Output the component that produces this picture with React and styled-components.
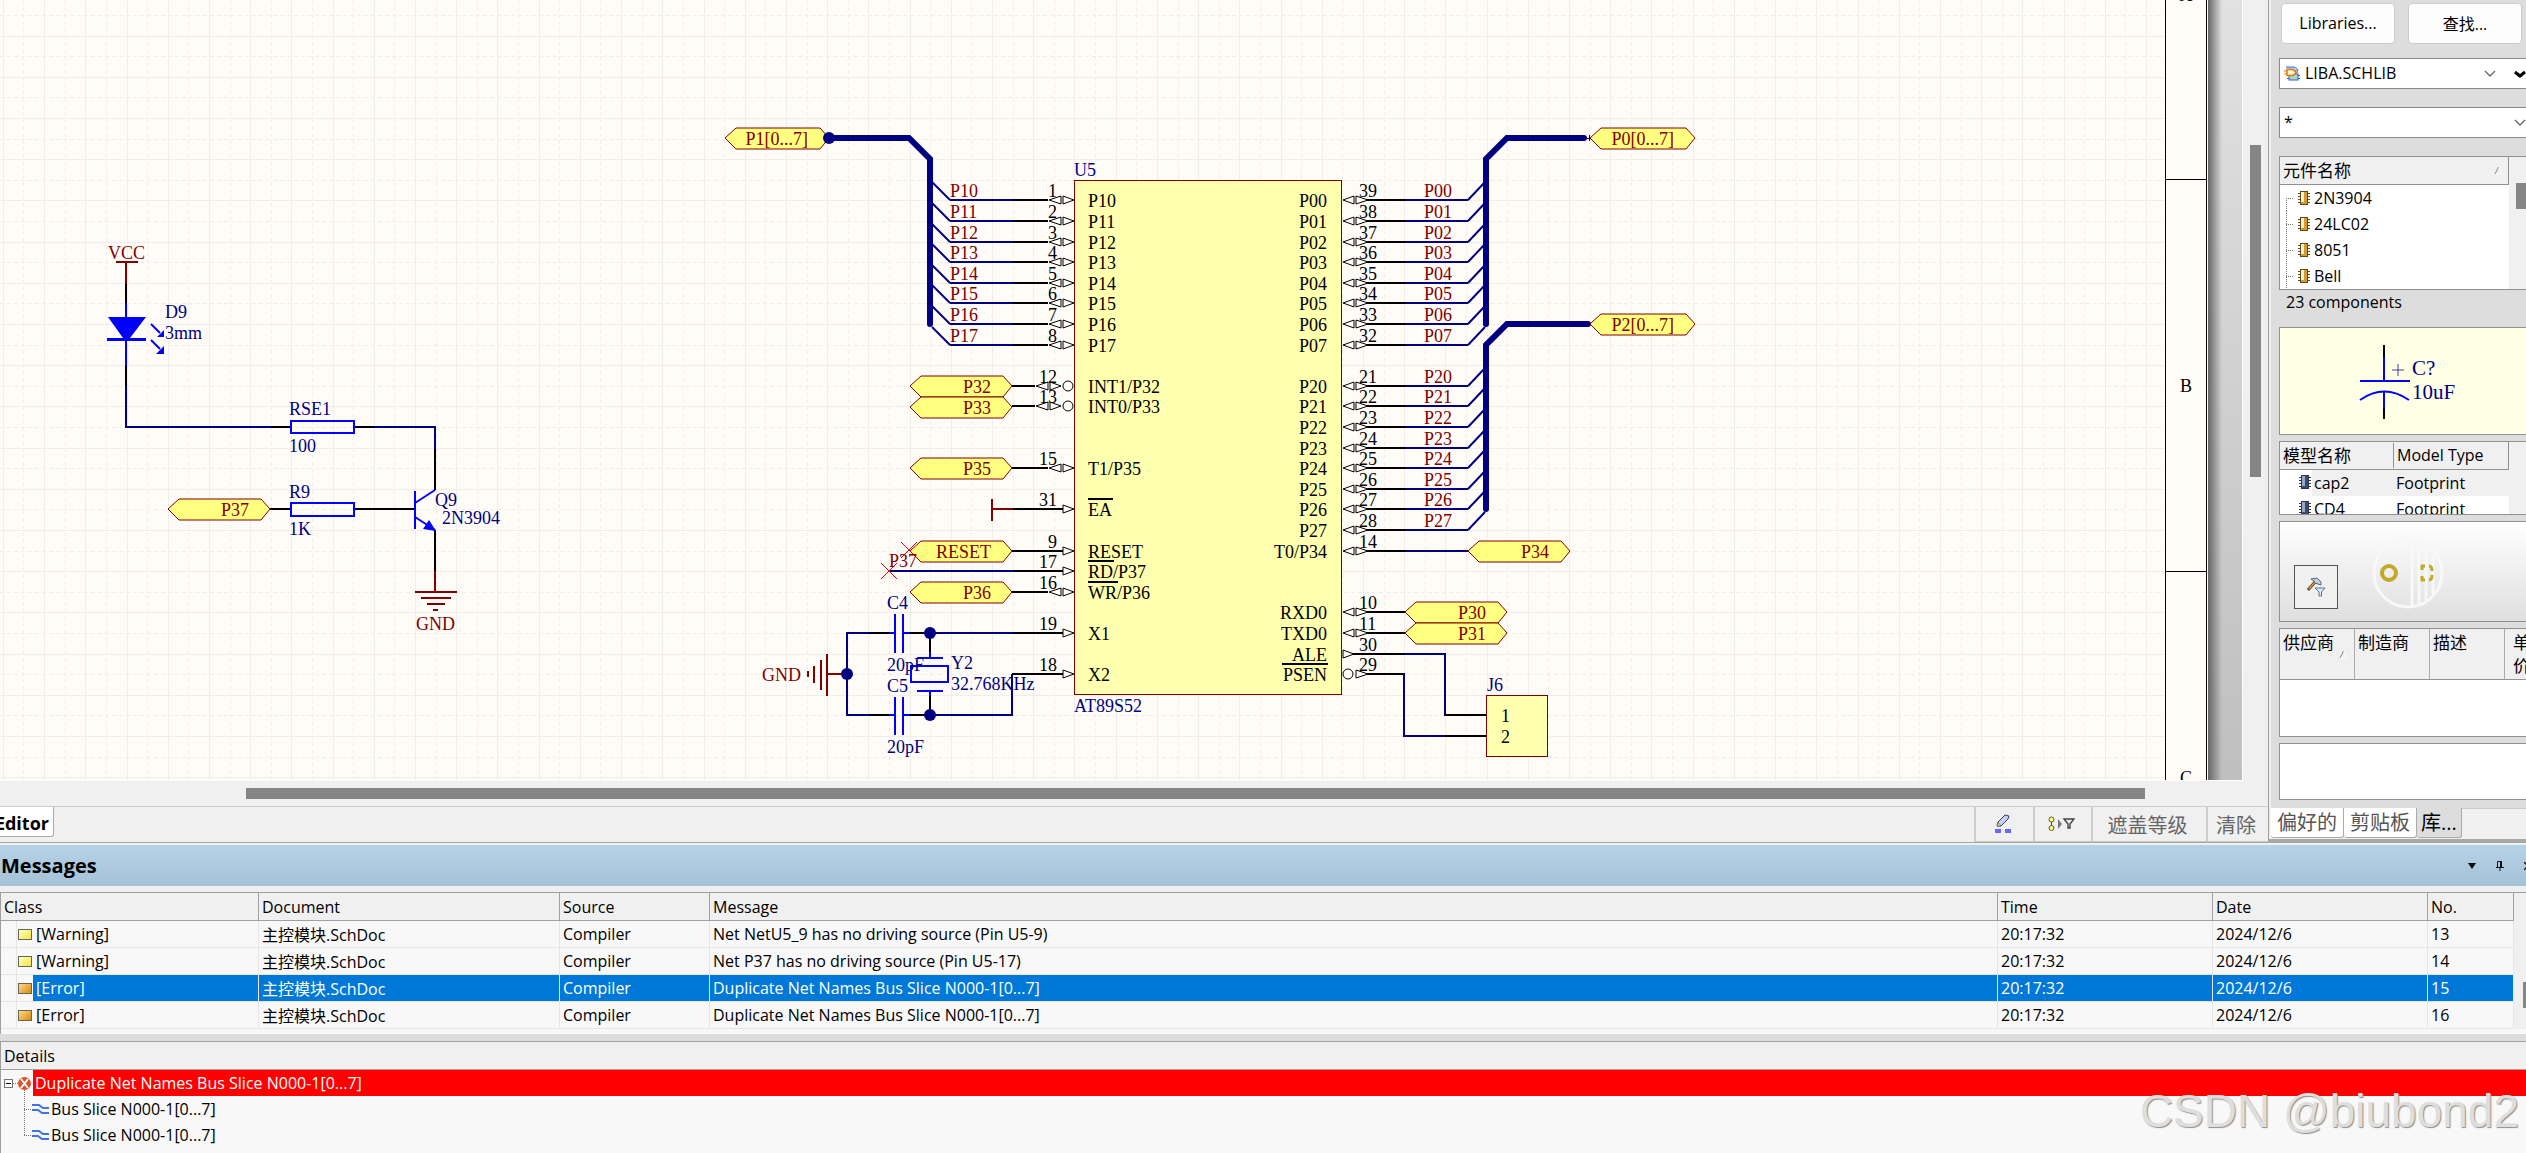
import React from "react";
import styled, { createGlobalStyle, css } from "styled-components";

const NAVY = "#000080";
const BLUE = "#0000ff";
const MAROON = "#800000";
const BLACK = "#000000";

const GlobalStyle = createGlobalStyle`
  * { box-sizing: border-box; }
  body {
    margin: 0;
    background: #f0f0f0;
    color: #000;
    font-family: "Open Sans", "Noto Sans CJK SC", sans-serif;
    font-size: 16px;
    overflow: hidden;
  }
  button, select, input {
    font: inherit;
    color: inherit;
  }
`;

/* ---------- schematic ---------- */

const Drawing = styled.svg`
  display: block;
  flex: none;
  background: #fffcf8;
`;

const Label = styled.text`
  font-family: "Liberation Serif", "Times New Roman", serif;
  font-size: ${(p) => p.$size || 18}px;
  fill: ${(p) => p.$color || NAVY};
  text-anchor: ${(p) => p.$anchor || "start"};
`;

const Wire = ({ d, color = NAVY, w = 2 }) => (
  <path d={d} fill="none" stroke={color} strokeWidth={w} shapeRendering="crispEdges" />
);

const row = (j) => Math.round(200.3 + 20.6 * j);

function Grid() {
  const lines = [];
  for (let i = -6; i <= 98; i += 1) {
    const x = Math.round(126.5 + 20.608 * i) + 0.5;
    if (x > 0 && x < 2164)
      lines.push(
        <line key={`v${i}`} x1={x} x2={x} y1="0" y2="780" strokeDasharray={i % 2 ? "4 3" : undefined} />
      );
  }
  for (let j = -10; j <= 28; j += 1) {
    const y = row(j) + 0.5;
    if (y > 0 && y < 780)
      lines.push(
        <line key={`h${j}`} x1="0" x2="2164" y1={y} y2={y} strokeDasharray={j % 2 ? "4 3" : undefined} />
      );
  }
  return <g stroke="#eeeeea">{lines}</g>;
}

function Port({ x, y, w = 102, text }) {
  const r = x + w;
  const top = y - 10;
  const bot = y + 11;
  return (
    <g>
      <polygon
        points={`${x},${y} ${x + 11},${top} ${r - 9},${top} ${r},${y} ${r - 9},${bot} ${x + 11},${bot}`}
        fill="#ffff80"
        stroke={MAROON}
      />
      <Label x={r - 21} y={y + 7} $anchor="end" $color={MAROON}>{text}</Label>
    </g>
  );
}

const Arrow = ({ base, tip, y }) => (
  <polygon
    points={`${base},${y - 4} ${tip},${y} ${base},${y + 4}`}
    fill="#fffcf8"
    stroke="#000"
    strokeWidth="1"
  />
);

function LeftPin({ j, num, name, io, inverted, over }) {
  const y = row(j);
  const base = inverted ? 1050 : 1063;
  const start = io ? base - 15 : base;
  return (
    <g>
      <Wire d={`M1012 ${y}H${start}`} color={BLACK} />
      {io && <Arrow base={base - 2} tip={base - 14} y={y} />}
      <Arrow base={base} tip={base + 11} y={y} />
      {inverted && <circle cx="1068" cy={y} r="5" fill="#fffcf8" stroke="#000" />}
      <Label x="1057" y={y - 3} $anchor="end" $color={BLACK}>{num}</Label>
      <Label x="1088" y={y + 7} $color={BLACK}>{name}</Label>
      {over && <Wire d={`M1088 ${y - 10}H${1088 + over}`} color={BLACK} />}
    </g>
  );
}

function RightPin({ j, num, name, io = true, inverted, over }) {
  const y = row(j);
  return (
    <g>
      <Wire d={`M${io || inverted ? 1366 : 1353} ${y}H1405`} color={BLACK} />
      {io && <Arrow base={1354} tip={1343} y={y} />}
      {(io || inverted) && <Arrow base={1356} tip={1368} y={y} />}
      {!io && !inverted && <Arrow base={1343} tip={1354} y={y} />}
      {inverted && <circle cx="1348" cy={y} r="5" fill="#fffcf8" stroke="#000" />}
      <Label x="1359" y={y - 3} $color={BLACK}>{num}</Label>
      <Label x="1327" y={y + 7} $anchor="end" $color={BLACK}>{name}</Label>
      {over && <Wire d={`M${1328 - over} ${y - 10}H1328`} color={BLACK} />}
    </g>
  );
}

const NetLeft = ({ j, text }) => {
  const y = row(j);
  return (
    <g>
      <Wire d={`M950 ${y}H1013`} />
      <path d={`M950 ${y}L932 ${y - 18}`} stroke={NAVY} strokeWidth="2" />
      <Label x="950" y={y - 3} $color={MAROON}>{text}</Label>
    </g>
  );
};

const NetRight = ({ j, text }) => {
  const y = row(j);
  return (
    <g>
      <Wire d={`M1405 ${y}H1468`} />
      <path d={`M1468 ${y}L1485 ${y - 18}`} stroke={NAVY} strokeWidth="2" />
      <Label x="1424" y={y - 3} $color={MAROON}>{text}</Label>
    </g>
  );
};

const Cross = ({ x, y }) => (
  <path d={`M${x - 8} ${y - 8}l16 16M${x + 8} ${y - 8}l-16 16`} stroke="#ff0000" />
);

const Junction = ({ x, y }) => <circle cx={x} cy={y} r="6" fill={NAVY} />;

const eight = [0, 1, 2, 3, 4, 5, 6, 7];

function Schematic() {
  return (
    <Drawing width="2208" height="780" viewBox="0 0 2208 780" role="img" aria-label="Schematic sheet">
      <Grid />

      {/* sheet border */}
      <rect x="2166" y="0" width="40" height="780" fill="#fffcf8" />
      <Wire d="M2165.5 0V780M2206.5 0V780M2166 179.5H2206M2166 571.5H2206" color={BLACK} w={1} />
      <Label x="2186" y="1" $anchor="middle" $color={BLACK}>A</Label>
      <Label x="2186" y="392" $anchor="middle" $color={BLACK}>B</Label>
      <Label x="2186" y="784" $anchor="middle" $color={BLACK}>C</Label>

      {/* LED driver */}
      <Label x="108" y="259" $color={MAROON}>VCC</Label>
      <Wire d="M116 262H138M126 262V284" color={MAROON} />
      <Wire d="M126 284V303M126 366V386M271 427H290M354 427H374M435 449V490M270 509H290M354 509H415M435 530V571" color={BLACK} />
      <Wire d="M126 303V366M415 491V529" color={BLUE} />
      <polygon points="108,317 146,317 130,338 123,338" fill={BLUE} />
      <Wire d="M107 339H146" color={BLUE} w={3} />
      <path d="M151 324L160 333M151 340L160 349M415 503L435 490M415 517L435 530" stroke={BLUE} strokeWidth="2" />
      <path d="M164 330V337H157ZM164 346V354H156ZM436 531L423 529L429 520Z" fill={BLUE} />
      <Wire d="M126 386V427H271M374 427H435V449" />
      <rect x="291" y="421" width="63" height="12" fill="none" stroke={BLUE} strokeWidth="2" />
      <rect x="291" y="503" width="63" height="13" fill="none" stroke={BLUE} strokeWidth="2" />
      <Label x="165" y="318">D9</Label>
      <Label x="165" y="339">3mm</Label>
      <Label x="289" y="415">RSE1</Label>
      <Label x="289" y="452">100</Label>
      <Label x="289" y="498">R9</Label>
      <Label x="289" y="535">1K</Label>
      <Label x="435" y="506">Q9</Label>
      <Label x="442" y="524">2N3904</Label>
      <Port x={168} y={509} text="P37" />
      <Wire d="M435 571V592M415 592H457M421 598H451M427 604H445M433 610H438" color={MAROON} />
      <Label x="416" y="630" $color={MAROON}>GND</Label>

      {/* microcontroller */}
      <rect x="1074.5" y="180.5" width="267" height="514" fill="#ffffb0" stroke={MAROON} />
      <Label x="1074" y="176">U5</Label>
      <Label x="1074" y="712">AT89S52</Label>

      {eight.map((n) => (
        <g key={n}>
          <LeftPin j={n} num={n + 1} name={`P1${n}`} io />
          <NetLeft j={n} text={`P1${n}`} />
          <RightPin j={n} num={39 - n} name={`P0${n}`} />
          <NetRight j={n} text={`P0${n}`} />
          <RightPin j={n + 9} num={21 + n} name={`P2${n}`} />
          <NetRight j={n + 9} text={`P2${n}`} />
        </g>
      ))}
      <LeftPin j={9} num="12" name="INT1/P32" io inverted />
      <LeftPin j={10} num="13" name="INT0/P33" io inverted />
      <LeftPin j={13} num="15" name="T1/P35" io />
      <LeftPin j={15} num="31" name="EA" over={25} />
      <LeftPin j={17} num="9" name="RESET" />
      <LeftPin j={18} num="17" name="RD/P37" over={26} />
      <LeftPin j={19} num="16" name="WR/P36" io over={30} />
      <LeftPin j={21} num="19" name="X1" />
      <LeftPin j={23} num="18" name="X2" />
      <RightPin j={17} num="14" name="T0/P34" />
      <RightPin j={20} num="10" name="RXD0" />
      <RightPin j={21} num="11" name="TXD0" />
      <RightPin j={22} num="30" name="ALE" io={false} />
      <RightPin j={23} num="29" name="PSEN" io={false} inverted over={46} />

      {/* buses */}
      <g fill="none" stroke={NAVY} strokeWidth="6" strokeLinecap="round">
        <path d="M829 138H909L930 159V324" />
        <path d="M1584 138H1507L1486 159V324" />
        <path d="M1588 324H1507L1486 345V509" />
      </g>
      <Wire d="M1586 138H1592M1589 135V141" w={1} />
      <Port x={725} y={138} w={104} text="P1[0...7]" />
      <Junction x={829} y={138} />
      <Port x={1590} y={138} w={105} text="P0[0...7]" />
      <Port x={1590} y={324} w={105} text="P2[0...7]" />

      {/* ports on the left */}
      <Port x={910} y={386} text="P32" />
      <Port x={910} y={407} text="P33" />
      <Port x={910} y={468} text="P35" />
      <Port x={910} y={551} text="RESET" />
      <Port x={910} y={592} text="P36" />
      <Wire d="M992 509H1013M992 499V521" color={MAROON} />
      <Wire d="M889 571H1013" />
      <Cross x={909} y={550} />
      <Cross x={889} y={571} />
      <Label x="889" y="567" $color={MAROON}>P37</Label>

      {/* ports on the right */}
      <Wire d="M1405 551H1468" />
      <Port x={1468} y={551} text="P34" />
      <Port x={1405} y={612} text="P30" />
      <Port x={1405} y={633} text="P31" />

      {/* oscillator */}
      <Wire d="M869 633H847V715H869M930 633H1013M930 715H1012V674" />
      <Wire d="M869 633H890M869 715H890M910 633H930M910 715H930M930 633V653M930 696V715" color={BLACK} />
      <Wire d="M889 633H895M903 633H910M889 715H895M903 715H910M895 614V653M903 614V653M895 697V735M903 697V735M917 658H943M917 691H943M930 652V658M930 691V696" color={BLUE} />
      <rect x="911" y="666" width="37" height="16" fill="none" stroke={BLUE} strokeWidth="2" />
      <Wire d="M827 674H847M827 654V696M821 660V690M814 666V683M808 671V677" color={MAROON} />
      <Junction x={847} y={674} />
      <Junction x={930} y={633} />
      <Junction x={930} y={715} />
      <Label x="762" y="681" $color={MAROON}>GND</Label>
      <Label x="887" y="609">C4</Label>
      <Label x="887" y="671">20pF</Label>
      <Label x="887" y="692">C5</Label>
      <Label x="887" y="753">20pF</Label>
      <Label x="951" y="669">Y2</Label>
      <Label x="951" y="690">32.768KHz</Label>

      {/* header J6 */}
      <Wire d="M1404 654H1445V715M1404 673V736H1446" />
      <Wire d="M1444 715H1486M1446 736H1486" color={BLACK} />
      <rect x="1486.5" y="695.5" width="61" height="61" fill="#ffffb0" stroke={MAROON} />
      <Label x="1487" y="691">J6</Label>
      <Label x="1501" y="722" $color={BLACK}>1</Label>
      <Label x="1501" y="743" $color={BLACK}>2</Label>
    </Drawing>
  );
}

/* ---------- window frame ---------- */

const Window = styled.div`
  display: flex;
  flex-direction: column;
  min-height: 100vh;
  position: relative;
  overflow: hidden;
`;

const Workspace = styled.div`
  display: flex;
`;

const EditorPane = styled.main`
  flex: 1;
  min-width: 0;
  display: flex;
  flex-direction: column;
`;

const CanvasRow = styled.div`
  display: flex;
`;

const Canvas = styled.div`
  flex: 1;
  min-width: 0;
  display: flex;
  overflow: hidden;
  border-right: 1px solid #fff;
  border-bottom: 1px solid #fff;
`;

const Backdrop = styled.div`
  flex: 1;
  background: linear-gradient(to right, #666 0, rgba(120, 120, 120, 0) 14px),
    linear-gradient(#e1e1e1, #bfbfbf);
`;

const VTrack = styled.div`
  width: 25px;
  padding: 145px 7px 0;
`;

const Thumb = styled.div`
  height: ${(p) => p.$height}px;
  background: #858585;
`;

const HTrack = styled.div`
  padding: 7px 123px 7px 246px;
`;

const StatusBar = styled.div`
  height: 36px;
  display: flex;
  border-top: 1px solid #ccc;
`;

const EditorTab = styled.button`
  width: 54px;
  height: 30px;
  padding: 2px 4px 0 0;
  display: flex;
  justify-content: flex-end;
  align-items: center;
  overflow: hidden;
  border: 0;
  border-right: 1px solid #aaa;
  border-bottom: 1px solid #aaa;
  border-radius: 0 0 3px 0;
  background: #fff;
  font-size: 18px;
  font-weight: 700;
`;

const Spacer = styled.div`
  flex: 1;
`;

const StatusButton = styled.button`
  width: ${(p) => p.$width}px;
  height: 35px;
  padding: 0 4px 0 0;
  display: flex;
  align-items: center;
  justify-content: center;
  border: 0;
  border-left: 2px solid #ccc;
  border-bottom: 1px solid #ccc;
  background: #f0f0f0;
  color: #666;
  font-size: 20px;
`;

/* ---------- library panel ---------- */

const SidePanel = styled.aside`
  width: 258px;
  flex: none;
  display: flex;
  flex-direction: column;
  overflow: hidden;
  border-left: 1px solid #a0a0a0;
  border-bottom: 3px solid #a9a9a9;
  background: #f0f0f0;
`;

const PanelBody = styled.div`
  flex: 1;
  display: flex;
  flex-direction: column;
  gap: 6px;
  margin-left: 2px;
  padding: 3px 0 8px 8px;
  background: #ddd;
`;

const ButtonRow = styled.div`
  display: flex;
  gap: 13px;
  padding-left: 2px;
  margin-bottom: 8px;
`;

const PushButton = styled.button`
  width: 114px;
  height: 41px;
  flex: none;
  padding: 0 0 2px;
  border: 1px solid #ccc;
  border-radius: 4px;
  background: #fdfdfd;
`;

const Combo = styled.div`
  height: 31px;
  margin-bottom: 12px;
  display: flex;
  align-items: center;
  gap: 4px;
  padding: 0 0 0 4px;
  border: 1px solid #8a8a8a;
  border-right: 0;
  background: #fff;
`;

const ComboSelect = styled.select`
  flex: 1;
  min-width: 0;
  height: 28px;
  padding: 0 0 2px;
  border: 0;
  appearance: none;
  background: transparent;
`;

const ComboInput = styled.input`
  flex: 1;
  min-width: 0;
  height: 28px;
  padding: 0 0 2px;
  border: 0;
  background: transparent;
`;

const ChevronGap = styled.span`
  width: 10px;
`;

const Box = styled.div`
  height: ${(p) => p.$height}px;
  display: flex;
  overflow: hidden;
  border: 1px solid #919191;
  border-right: 0;
  background: ${(p) => p.$fill || "#fff"};
`;

const ListArea = styled.div`
  flex: 1;
  min-width: 0;
`;

const SideTrack = styled.div`
  width: 17px;
  padding: 26px 0 0 7px;
  background: #f0f0f0;
`;

const ListHead = styled.div`
  display: flex;
  height: 28px;
  line-height: 28px;
  padding-left: 3px;
  align-items: center;
  justify-content: space-between;
  font-size: 17px;
  background: #f0f0f0;
  border-right: 1px solid #919191;
  border-bottom: 1px solid #919191;
`;

const HeadName = styled.span`
  width: 110px;
`;

const HeadType = styled.span`
  flex: 1;
  height: 25px;
  line-height: 25px;
  padding-left: 3px;
  border-left: 1px solid #919191;
  font-size: 16px;
`;

const Items = styled.ul`
  list-style: none;
  margin: 0;
  padding: 0;
`;

const TreeItem = styled.li`
  height: 26px;
  display: flex;
  align-items: center;
  gap: 4px;
  padding-left: 6px;
`;

const ModelItem = styled.li`
  height: 26px;
  display: grid;
  grid-template-columns: 32px 82px 1fr;
  align-items: center;
`;

const ModelCell = styled.span`
  height: 26px;
  line-height: 26px;
  padding-left: ${(p) => (p.$icon ? 19 : 2)}px;
  background: ${(p) => (p.$active ? "#f0f0f0" : "transparent")};
`;

const Count = styled.div`
  height: 31px;
  line-height: 25px;
  padding-left: 7px;
`;

const Preview3D = styled.div`
  height: 101px;
  display: flex;
  align-items: flex-start;
  padding: 28px 0 0 14px;
  border: 1px solid #919191;
  border-right: 0;
  background: linear-gradient(#fff, #dfdfdf);
`;

const ToolButton = styled.button`
  width: 44px;
  height: 44px;
  margin-top: 15px;
  padding: 0;
  display: flex;
  align-items: center;
  justify-content: center;
  border: 1px solid #555;
  background: #f0f0f0;
`;

const Footprint = styled.svg`
  margin: -14px 0 0 34px;
`;

const SupplierTable = styled.table`
  width: 273px;
  flex: none;
  align-self: flex-start;
  table-layout: fixed;
  border-collapse: separate;
  border-spacing: 0;
  background: #f0f0f0;

  th {
    height: 51px;
    padding: 2px 3px;
    font-size: 17px;
    font-weight: 400;
    line-height: 23px;
    text-align: left;
    vertical-align: top;
    border-right: 1px solid #aaa;
    border-bottom: 1px solid #919191;
  }
  th:last-child {
    padding-left: 8px;
    padding-right: 20px;
  }
`;

const SortHead = styled.span`
  display: flex;
  flex-direction: column;
  white-space: nowrap;

  svg {
    align-self: flex-end;
    margin: -4px 3px 0 0;
  }
`;

const SideTabs = styled.div`
  display: flex;
  height: 31px;
  margin-left: 2px;
`;

const SideTab = styled.button`
  height: 30px;
  width: ${(p) => p.$width}px;
  padding: 0;
  white-space: nowrap;
  border: 0;
  border-right: 1px solid #aaa;
  border-bottom: 1px solid #aaa;
  border-radius: 0 0 3px 3px;
  background: #fff;
  color: #555;
  font-size: 20px;
  line-height: 28px;
  ${(p) =>
    p.$active &&
    css`
      background: #ddd;
      color: #000;
    `}
`;

const TabFill = styled.div`
  flex: 1;
  border-top: 1px solid #ccc;
`;

/* ---------- messages panel ---------- */

const Messages = styled.section`
  flex: 1;
  display: flex;
  flex-direction: column;
  border-top: 1px solid #a5a5a5;
  background: #f0f0f0;
`;

const TitleBar = styled.header`
  height: 41px;
  margin: 2px 0 6px;
  padding-left: 1px;
  display: flex;
  align-items: center;
  overflow: hidden;
  background: linear-gradient(#b6d2e6, #a4c2d8);
`;

const Title = styled.h2`
  flex: 1;
  margin: 0;
  font-size: 20px;
  line-height: 30px;
`;

const TitleButtons = styled.div`
  width: 64px;
  flex: none;
  display: flex;
  gap: 8px;
`;

const IconButton = styled.button`
  width: 20px;
  height: 20px;
  flex: none;
  padding: 0;
  border: 0;
  background: none;
  display: flex;
  align-items: center;
  justify-content: center;
`;

const TableRow = styled.div`
  display: flex;
  padding-bottom: 5px;
  border-top: 1px solid #a0a0a0;
  border-left: 1px solid #a0a0a0;
  background: #f8f8f8;
`;

const MessageTable = styled.table`
  flex: 1;
  min-width: 0;
  table-layout: fixed;
  border-collapse: separate;
  border-spacing: 0;

  th, td {
    padding: 0 3px;
    text-align: left;
    font-weight: 400;
    white-space: nowrap;
    overflow: hidden;
  }
  th {
    height: 28px;
    background: #f0f0f0;
    border-right: 1px solid #a0a0a0;
    border-bottom: 1px solid #a0a0a0;
  }
  td {
    height: 27px;
    border-right: 1px solid #e6e6e6;
    border-bottom: 1px solid #e6e6e6;
  }
  td:first-child {
    padding: 0;
  }
`;

const MessageRow = styled.tr`
  ${(p) =>
    p.$active &&
    css`
      td {
        background: #0078d7;
        color: #fff;
      }
    `}
`;

const ClassCell = styled.div`
  display: flex;
  align-items: center;
  height: 26px;
  padding-left: 15px;
  background: linear-gradient(to right, #f8f8f8 32px, transparent 32px);
`;

const ClassName = styled.span`
  color: ${(p) => (p.$active ? "#fff" : "#000")};
`;

const Badge = styled.span`
  width: 14px;
  height: 11px;
  margin: 0 4px 0 1px;
  border: 1px solid #666655;
  background: ${(p) =>
    p.$kind === "Error"
      ? "linear-gradient(135deg, #ffd98a, #d98a10)"
      : "linear-gradient(135deg, #ffffc8, #f4e640)"};
`;

const Rule = styled.span`
  width: 1px;
  height: 26px;
  background: #e6e6e6;
`;

const MessageTrack = styled.div`
  width: 12px;
  padding: 89px 0 0 9px;
  background: #f0f0f0;
`;

const Splitter = styled.div`
  height: 8px;
  background: #ddd;
  border-bottom: 1px solid #a0a0a0;
`;

const Details = styled.div`
  flex: 1;
  border-left: 1px solid #a0a0a0;
  background: #f8f8f8;
`;

const DetailsHead = styled.h3`
  margin: 0;
  height: 28px;
  padding-left: 3px;
  font-size: 16px;
  font-weight: 400;
  line-height: 28px;
  background: #f0f0f0;
  border-bottom: 1px solid #a0a0a0;
`;

const DetailItem = styled.li`
  height: 26px;
  display: flex;
  align-items: center;
  line-height: 26px;
`;

const DetailText = styled.span`
  flex: 1;
  padding-left: 2px;
  color: ${(p) => (p.$error ? "#fff" : "#000")};
  background: ${(p) => (p.$error ? "#f00" : "transparent")};
`;

const Watermark = styled.div`
  position: absolute;
  right: 7px;
  bottom: 16px;
  font-family: "Liberation Sans", Arial, sans-serif;
  font-size: 46px;
  line-height: 52px;
  color: #dedede;
  text-shadow: 1px 1px 1px #8c8c8c;
  pointer-events: none;
`;

/* ---------- icons ---------- */

const Chevron = ({ heavy }) => (
  <svg width="12" height="12" viewBox="0 0 12 12" fill="none" stroke={heavy ? "#000" : "#666"} strokeWidth={heavy ? 3 : 1.3}>
    <path d={heavy ? "M1 4L6 8L11 4" : "M1 3L6 8L11 3"} />
  </svg>
);

const SortMark = () => (
  <svg width="9" height="9" viewBox="0 0 9 9" fill="none">
    <path d="M4.500 1L8 8H1" stroke="#fff" />
    <path d="M1 8L4.500 1" stroke="#888" />
  </svg>
);

const LibraryIcon = () => (
  <svg width="17" height="17" viewBox="0 0 17 17" fill="none">
    <path d="M2 2H9C13 2 14 5 14 6H4" fill="#b9ccf0" stroke="#4468c8" />
    <rect x="5" y="9" width="9" height="6" fill="#a8d4d0" stroke="#3b62b8" />
    <path d="M3 10.500H5M3 13.500H5M14 10.500H16M14 13.500H16" stroke="#3b62b8" />
    <path d="M3 4.500H9L12 7.500L9 10.500H3Z" fill="#fff5d0" stroke="#e07a10" strokeWidth="1.500" />
    <path d="M0 6H3M0 9H3M12 7.500H14" stroke="#e07a10" />
  </svg>
);

const ChipIcon = ({ light = "#fff0c0", dark = "#d39b30", edge = "#5a4a20" }) => (
  <svg width="12" height="14" viewBox="0 0 12 14">
    <path d="M0 2.500H12M0 5.500H12M0 8.500H12M0 11.500H12" stroke={edge} />
    <rect x="2.500" y="0.500" width="7" height="13" fill={dark} stroke={edge} />
    <rect x="3" y="1" width="3" height="10" fill={light} />
  </svg>
);

const Branch = ({ first }) => (
  <svg width="8" height="26" viewBox="0 0 8 26" fill="none" stroke="#777" strokeDasharray="1 1">
    <path d={`M0.500 ${first ? 13 : 0}V26M0 13.500H8`} />
  </svg>
);

const HammerIcon = () => (
  <svg width="20" height="20" viewBox="0 0 20 20">
    <path d="M2 13L9 5" stroke="#5d4520" strokeWidth="3" />
    <path d="M3 12L9 5" stroke="#d9a038" strokeWidth="1.200" />
    <path d="M5 2L11 1L15 5V8L12 7L9 6L8 4Z" fill="#c3cede" stroke="#56657e" />
    <path d="M9 11H19L15.500 15V19H13V15Z" fill="#dce9f5" stroke="#5c7490" />
  </svg>
);

const PencilIcon = () => (
  <svg width="18" height="20" viewBox="0 0 18 20">
    <path d="M3 12L4 8L11 1L15 2L14 5L7 12Z" fill="#c8d0ee" stroke="#38406c" />
    <path d="M3 12L4 8L7 12Z" fill="#f4d878" stroke="#38406c" strokeWidth="0.500" />
    <path d="M1 15H7V19H1ZM11 15H17V19H11Z" fill="#6868ff" />
  </svg>
);

const FilterIcon = () => (
  <svg width="27" height="16" viewBox="0 0 27 16">
    <path d="M3.500 3V13" stroke="#444" />
    <circle cx="3.500" cy="3.500" r="2.500" fill="#ffff60" stroke="#555" />
    <circle cx="3.500" cy="12" r="2.500" fill="#ffff60" stroke="#555" />
    <path d="M10 3L14 8L10 13Z" fill="#777" />
    <path d="M16 3H26L22 8V12H20V8Z" fill="#e8eef0" stroke="#444" strokeWidth="1.400" />
  </svg>
);

const NetIcon = () => (
  <svg width="17" height="12" viewBox="0 0 17 12" fill="none" stroke="#3f74dc" strokeWidth="2">
    <path d="M0 2H7L11 5H17M0 7H6L10 10H17" />
  </svg>
);

const ExpandIcon = () => (
  <svg width="32" height="26" viewBox="0 0 32 26">
    <rect x="3.500" y="9.500" width="8" height="8" fill="#fff" stroke="#777" />
    <path d="M5 13.500H10" stroke="#000" />
    <path d="M12 13.500H17M23.500 20V26" stroke="#777" strokeDasharray="1 1" />
    <circle cx="23.500" cy="13.500" r="6.500" fill="#e2502c" />
    <path d="M20 9L27 18M27 9L20 18" stroke="#fff" strokeWidth="2" />
  </svg>
);

const DetailBranch = ({ last }) => (
  <svg width="31" height="26" viewBox="0 0 31 26" fill="none" stroke="#777" strokeDasharray="1 1">
    <path d={`M23.500 0V${last ? 13 : 26}M23 13.500H31`} />
  </svg>
);

/* ---------- data ---------- */

const messages = [
  { kind: "Warning", text: "Net NetU5_9 has no driving source (Pin U5-9)", no: 13 },
  { kind: "Warning", text: "Net P37 has no driving source (Pin U5-17)", no: 14 },
  { kind: "Error", text: "Duplicate Net Names Bus Slice N000-1[0...7]", no: 15, active: true },
  { kind: "Error", text: "Duplicate Net Names Bus Slice N000-1[0...7]", no: 16 },
];

const parts = ["2N3904", "24LC02", "8051", "Bell"];
const models = ["cap2", "CD4"];

function LibraryPanel() {
  return (
    <SidePanel>
      <PanelBody>
        <ButtonRow>
          <PushButton>Libraries...</PushButton>
          <PushButton>查找...</PushButton>
        </ButtonRow>
        <Combo>
          <LibraryIcon />
          <ComboSelect aria-label="Library" defaultValue="LIBA.SCHLIB">
            <option>LIBA.SCHLIB</option>
          </ComboSelect>
          <Chevron />
          <ChevronGap />
          <Chevron heavy />
        </Combo>
        <Combo>
          <ComboInput aria-label="Component filter" defaultValue="*" />
          <Chevron />
        </Combo>
        <div>
          <Box $height={134}>
            <ListArea>
              <ListHead>
                <span>元件名称</span>
                <IconButton as="span"><SortMark /></IconButton>
              </ListHead>
              <Items>
                {parts.map((name, i) => (
                  <TreeItem key={name}>
                    <Branch first={i === 0} />
                    <ChipIcon />
                    <span>{name}</span>
                  </TreeItem>
                ))}
              </Items>
            </ListArea>
            <SideTrack>
              <Thumb $height={26} />
            </SideTrack>
          </Box>
          <Count>23 components</Count>
        </div>
        <Box $height={108} $fill="#ffffe6">
          <svg width="246" height="107" viewBox="0 0 246 107" role="img" aria-label="Capacitor symbol">
            <Wire d="M104 17V29M104 80V91" color={BLACK} />
            <Wire d="M104 29V53M104 63V80M80 53H130" color={BLUE} />
            <path d="M80 72Q104 55 129 72" fill="none" stroke={BLUE} strokeWidth="2" />
            <path d="M112 42H124M118 36V48" stroke="#4040a0" />
            <Label x="132" y="47" $size={21}>C?</Label>
            <Label x="132" y="71" $size={21}>10uF</Label>
          </svg>
        </Box>
        <Box $height={74}>
          <ListArea>
            <ListHead>
              <HeadName>模型名称</HeadName>
              <HeadType>Model Type</HeadType>
            </ListHead>
            <Items>
              {models.map((name, i) => (
                <ModelItem key={name}>
                  <ModelCell $icon>
                    <ChipIcon light="#98a8c8" dark="#3c4a70" edge="#303848" />
                  </ModelCell>
                  <ModelCell $active={i === 0}>{name}</ModelCell>
                  <ModelCell $active={i === 0}>Footprint</ModelCell>
                </ModelItem>
              ))}
            </Items>
          </ListArea>
          <SideTrack />
        </Box>
        <Preview3D>
          <ToolButton aria-label="Preview settings"><HammerIcon /></ToolButton>
          <Footprint width="74" height="74" viewBox="0 0 74 74" fill="none">
            <circle cx="36" cy="37" r="34" stroke="#f8f8f8" strokeWidth="3" />
            <path d="M40 4V70M47 6V68M54 10V64M61 16V58" stroke="#f8f8f8" strokeWidth="3" />
            <circle cx="17" cy="37" r="7" stroke="#c2aa28" strokeWidth="4" />
            <path d="M53 30H50V34M50 40V44H53M57 30Q60 30 60 35M60 39Q60 44 57 44" stroke="#c2aa28" strokeWidth="3" />
          </Footprint>
        </Preview3D>
        <Box $height={109}>
          <SupplierTable>
            <colgroup>
              <col width="75" />
              <col width="75" />
              <col width="75" />
              <col width="48" />
            </colgroup>
            <thead>
              <tr>
                <th><SortHead>供应商<SortMark /></SortHead></th>
                <th>制造商</th>
                <th>描述</th>
                <th>单价</th>
              </tr>
            </thead>
          </SupplierTable>
        </Box>
        <Box $height={57} />
      </PanelBody>
      <SideTabs>
        <SideTab $width={73}>偏好的</SideTab>
        <SideTab $width={73}>剪贴板</SideTab>
        <SideTab $width={45} $active>库...</SideTab>
        <TabFill />
      </SideTabs>
    </SidePanel>
  );
}

function MessagesPanel() {
  return (
    <Messages>
      <TitleBar>
        <Title>Messages</Title>
        <TitleButtons>
          <IconButton aria-label="Menu">
            <svg width="8" height="6" viewBox="0 0 8 6"><path d="M0 0H8L4 6Z" /></svg>
          </IconButton>
          <IconButton aria-label="Pin">
            <svg width="8" height="10" viewBox="0 0 8 10" fill="none" stroke="#111">
              <path d="M1.500 6V0.500H6M0 6.500H8M4 7V10" />
              <path d="M5 0V6" strokeWidth="2" />
            </svg>
          </IconButton>
          <IconButton aria-label="Close">
            <svg width="8" height="8" viewBox="0 0 8 8" stroke="#111" strokeWidth="1.500">
              <path d="M0 0L8 8M8 0L0 8" />
            </svg>
          </IconButton>
        </TitleButtons>
      </TitleBar>
      <TableRow>
        <MessageTable>
          <colgroup>
            <col width="258" />
            <col width="301" />
            <col width="150" />
            <col />
            <col width="215" />
            <col width="215" />
            <col width="86" />
          </colgroup>
          <thead>
            <tr>
              {["Class", "Document", "Source", "Message", "Time", "Date", "No."].map((h) => (
                <th key={h}>{h}</th>
              ))}
            </tr>
          </thead>
          <tbody>
            {messages.map((m) => (
              <MessageRow key={m.no} $active={m.active}>
                <td>
                  <ClassCell>
                    <Rule />
                    <Badge $kind={m.kind} />
                    <ClassName $active={m.active}>[{m.kind}]</ClassName>
                  </ClassCell>
                </td>
                <td>主控模块.SchDoc</td>
                <td>Compiler</td>
                <td>{m.text}</td>
                <td>20:17:32</td>
                <td>2024/12/6</td>
                <td>{m.no}</td>
              </MessageRow>
            ))}
          </tbody>
        </MessageTable>
        <MessageTrack>
          <Thumb $height={26} />
        </MessageTrack>
      </TableRow>
      <Splitter />
      <Details>
        <DetailsHead>Details</DetailsHead>
        <Items>
          <DetailItem>
            <ExpandIcon />
            <DetailText $error>Duplicate Net Names Bus Slice N000-1[0...7]</DetailText>
          </DetailItem>
          <DetailItem>
            <DetailBranch />
            <NetIcon />
            <DetailText>Bus Slice N000-1[0...7]</DetailText>
          </DetailItem>
          <DetailItem>
            <DetailBranch last />
            <NetIcon />
            <DetailText>Bus Slice N000-1[0...7]</DetailText>
          </DetailItem>
        </Items>
      </Details>
    </Messages>
  );
}

export default function App() {
  return (
    <Window>
      <GlobalStyle />
      <Workspace>
        <EditorPane>
          <CanvasRow>
            <Canvas>
              <Schematic />
              <Backdrop />
            </Canvas>
            <VTrack>
              <Thumb $height={332} />
            </VTrack>
          </CanvasRow>
          <HTrack>
            <Thumb $height={11} />
          </HTrack>
          <StatusBar>
            <EditorTab>Editor</EditorTab>
            <Spacer />
            <StatusButton $width={59} aria-label="Highlight"><PencilIcon /></StatusButton>
            <StatusButton $width={58} aria-label="Filter"><FilterIcon /></StatusButton>
            <StatusButton $width={115}>遮盖等级</StatusButton>
            <StatusButton $width={62}>清除</StatusButton>
          </StatusBar>
        </EditorPane>
        <LibraryPanel />
      </Workspace>
      <MessagesPanel />
      <Watermark>CSDN @biubond2</Watermark>
    </Window>
  );
}
